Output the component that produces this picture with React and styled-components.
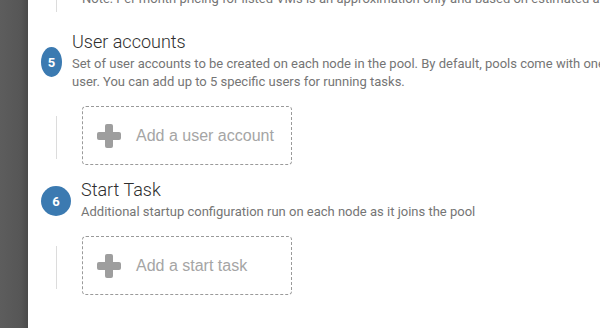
import React from 'react';
import styled, { createGlobalStyle } from 'styled-components';

const GlobalStyle = createGlobalStyle`
  html, body {
    margin: 0;
    padding: 0;
    width: 600px;
    height: 328px;
    overflow: hidden;
    background: #ffffff;
  }
  #root {
    height: 100%;
  }
`;

const steps = [
  {
    num: 5,
    title: 'User accounts',
    desc: 'Set of user accounts to be created on each node in the pool. By default, pools come with one user. You can add up to 5 specific users for running tasks.',
    action: 'Add a user account',
    circleWidth: 21,
  },
  {
    num: 6,
    title: 'Start Task',
    desc: 'Additional startup configuration run on each node as it joins the pool',
    action: 'Add a start task',
    circleWidth: 30,
  },
];

const PlusIcon = () => (
  <svg width="24" height="24" viewBox="0 0 24 24" aria-hidden="true">
    <rect x="8" y="0" width="8" height="24" rx="2" fill="#9e9e9e" />
    <rect x="0" y="8" width="24" height="8" rx="2" fill="#9e9e9e" />
  </svg>
);

const App = () => {
  return (
    <Page>
      <GlobalStyle />
      <Backdrop />
      <Panel>
        <PrevBody>
          <Connector $short />
          <Note>
            Note: Per month pricing for listed VMs is an approximation only and based on estimated average usage.
          </Note>
        </PrevBody>
        {steps.map((step) => (
          <Section key={step.num}>
            <StepHeader>
              <StepBadge $w={step.circleWidth}>{step.num}</StepBadge>
              <StepText>
                <StepTitle>{step.title}</StepTitle>
                <StepDesc>{step.desc}</StepDesc>
              </StepText>
            </StepHeader>
            <StepBody>
              <Connector />
              <AddButton type="button">
                <PlusIcon />
                <AddLabel>{step.action}</AddLabel>
              </AddButton>
            </StepBody>
          </Section>
        ))}
      </Panel>
    </Page>
  );
};

const Page = styled.div`
  display: flex;
  width: 600px;
  height: 328px;
  overflow: hidden;
`;

const Backdrop = styled.div`
  flex: 0 0 28px;
  background: linear-gradient(to right, #5d5d5d 0%, #565656 75%, #4a4a4a 100%);
`;

const Panel = styled.div`
  flex: 1;
  min-width: 0;
  background: #ffffff;
  padding-left: 13px;
  overflow: hidden;
  font-family: Roboto, 'Liberation Sans', sans-serif;
`;

const PrevBody = styled.div`
  display: flex;
  height: 27px;
  margin-top: -10px;
  padding-left: 15px;
`;

const Connector = styled.div`
  flex: 0 0 1px;
  background: #dcdcdc;
  margin: ${(p) => (p.$short ? '0 0 5px' : '10px 0 6px')};
`;

const Note = styled.p`
  margin: 0 0 0 25px;
  font-size: 13px;
  line-height: 18px;
  color: #757575;
  white-space: nowrap;
`;

const Section = styled.section`
  margin-top: 12px;
`;

const StepHeader = styled.div`
  display: flex;
  align-items: center;
  gap: 10px;
`;

const StepBadge = styled.div`
  flex: 0 0 auto;
  width: ${(p) => p.$w}px;
  height: 30px;
  margin-top: 4px;
  border-radius: 50%;
  background: #3b7ab1;
  color: #ffffff;
  font-size: 13px;
  font-weight: 700;
  display: flex;
  align-items: center;
  justify-content: center;
`;

const StepText = styled.div`
  flex: 0 0 545px;
`;

const StepTitle = styled.h3`
  margin: 0;
  font-size: 18px;
  font-weight: 300;
  line-height: 26px;
  color: #2e2e2e;
`;

const StepDesc = styled.p`
  margin: 0;
  font-size: 13px;
  line-height: 18px;
  color: #757575;
`;

const StepBody = styled.div`
  display: flex;
  margin-top: 15px;
  padding-left: 15px;
`;

const AddButton = styled.button`
  margin-left: 25px;
  width: 210px;
  height: 59px;
  box-sizing: border-box;
  border: 1px dashed #9a9a9a;
  border-radius: 4px;
  background: transparent;
  padding: 0 0 0 14px;
  display: flex;
  align-items: center;
  gap: 15px;
  cursor: pointer;
`;

const AddLabel = styled.span`
  font-family: 'Liberation Sans', Arial, sans-serif;
  font-size: 16px;
  color: #a5a5a5;
`;

export default App;
